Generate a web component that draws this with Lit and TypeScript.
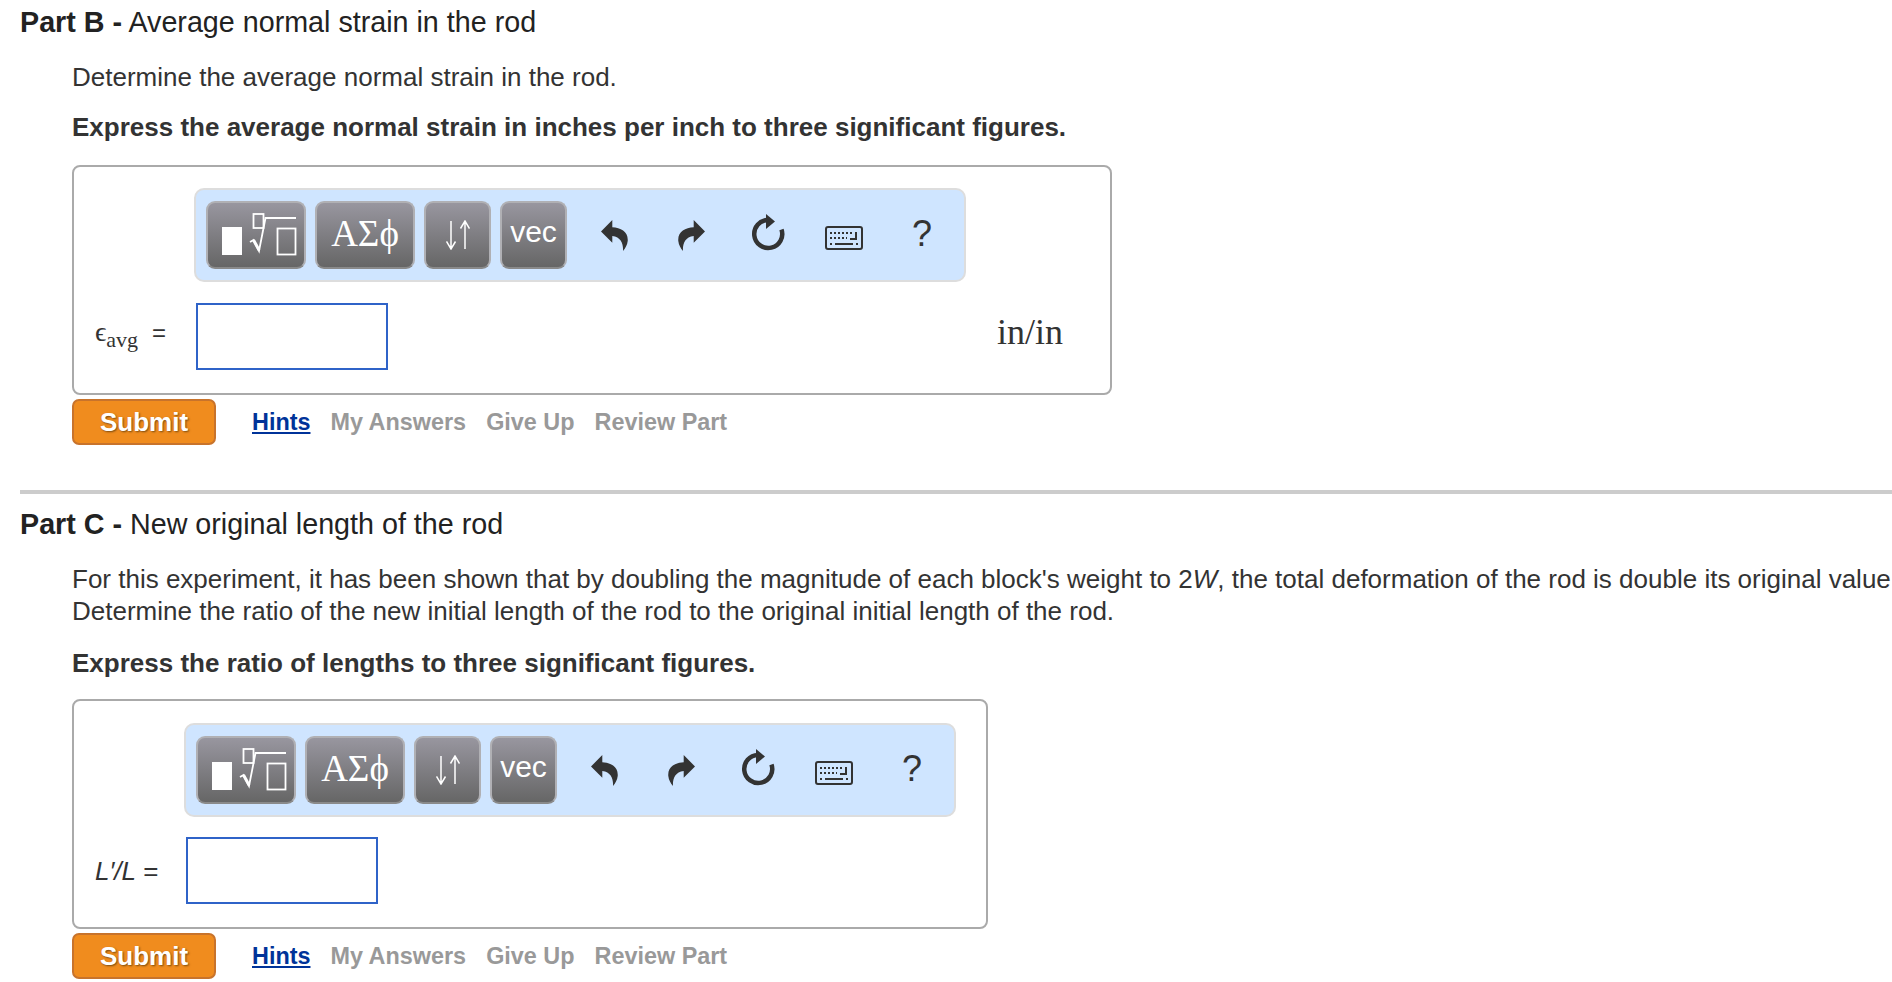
import { LitElement, html, css, svg } from "lit";
import { customElement } from "lit/decorators.js";

const templateIcon = svg`
  <svg class="ic-template" viewBox="0 0 100 68" width="100" height="68">
    <rect x="16" y="26" width="20" height="28" fill="#fff"/>
    <rect x="47.500" y="13" width="10" height="14" fill="none" stroke="#fff" stroke-width="1.800"/>
    <path d="M44 41l3.500-2 5.500 11 6.500-33H90" fill="none" stroke="#fff" stroke-width="1.800"/>
    <path d="M47.500 39l5.500 10" fill="none" stroke="#fff" stroke-width="3"/>
    <rect x="71.500" y="27.500" width="18" height="26" fill="none" stroke="#fff" stroke-width="1.800"/>
  </svg>`;

const arrowsIcon = svg`
  <svg viewBox="0 0 24 30" width="24" height="30">
    <path d="M5 1v27M.500 21.500L5 29l4.500-7.500" fill="none" stroke="#fff" stroke-width="1.500"/>
    <path d="M19 29V2M14.500 8.500L19 1l4.500 7.500" fill="none" stroke="#fff" stroke-width="1.500"/>
  </svg>`;

const undoIcon = svg`
  <svg viewBox="0 0 27 31" width="27" height="31">
    <path fill="#333" d="M0 11.500L11.300 0v7.300C20 7.600 27.500 12 26.700 21c-.4 4-2.500 7.500-4.700 10 .5-7-2-14-10.700-15v6.700z"/>
  </svg>`;

const redoIcon = svg`
  <svg viewBox="0 0 27 31" width="27" height="31">
    <path fill="#333" d="M27 11.500L15.700 0v7.300C7 7.600-.5 12 .3 21c.4 4 2.500 7.500 4.700 10-.5-7 2-14 10.700-15v6.700z"/>
  </svg>`;

const refreshIcon = svg`
  <svg viewBox="0 0 34 38" width="34" height="38">
    <path d="M30.500 15.500a14 14 0 1 1-13.500-9.500" fill="none" stroke="#333" stroke-width="4.500"/>
    <path fill="#333" d="M15 0l9 7.500-9 7.500z"/>
  </svg>`;

const keyboardIcon = svg`
  <svg viewBox="0 0 38 24" width="38" height="24">
    <rect x="1" y="1" width="36" height="22" rx="2" fill="none" stroke="#333" stroke-width="2"/>
    <path fill="none" stroke="#333" stroke-width="2" stroke-dasharray="2 2" d="M5 7h24M5 12h17"/>
    <path fill="none" stroke="#333" stroke-width="2" d="M31 6v7h-6M10 18h18"/>
    <path fill="#333" d="M5 17h2v2H5zM31 17h2v2h-2z"/>
  </svg>`;

const toolbar = () => html`
  <div class="toolbar">
    <span class="btn wide">${templateIcon}</span>
    <span class="btn wide greek">ΑΣϕ</span>
    <span class="btn narrow">${arrowsIcon}</span>
    <span class="btn narrow vec">vec</span>
    <span class="tool undo">${undoIcon}</span>
    <span class="tool redo">${redoIcon}</span>
    <span class="tool refresh">${refreshIcon}</span>
    <span class="tool keyboard">${keyboardIcon}</span>
    <span class="tool help">?</span>
  </div>
`;

const actions = () => html`
  <div class="actions">
    <span class="submit">Submit</span>
    <a class="link hints">Hints</a>
    <a class="link">My Answers</a>
    <a class="link">Give Up</a>
    <a class="link">Review Part</a>
  </div>
`;

@customElement("app-root")
export class AppRoot extends LitElement {
  static styles = css`
    :host {
      display: block;
      width: 1892px;
      height: 982px;
      overflow: hidden;
      background: #fff;
      color: #333;
      font-family: "Liberation Sans", Arial, sans-serif;
      font-size: 26px;
      line-height: 32px;
    }
    .part-b { padding: 6px 0 0 20px; height: 490px; box-sizing: border-box; }
    .part-c { border-top: 4px solid #ccc; margin-left: 20px; padding-top: 14px; }
    .title { color: #222; font-size: 28.700px; }
    .body { margin: 23px 0 0 52px; white-space: nowrap; }
    .strong { font-weight: bold; margin: 18px 0 0 52px; }
    .part-c .strong { margin-top: 20px; }
    .box {
      margin: 22px 0 0 52px;
      border: 2px solid #aaa;
      border-radius: 8px;
      box-sizing: border-box;
      height: 230px;
      display: flex;
      flex-direction: column;
    }
    .part-b .box { width: 1040px; padding: 21px 0 0 120px; }
    .part-c .box { width: 916px; padding: 22px 0 0 110px; margin-top: 20px; }

    .toolbar {
      width: 772px;
      height: 94px;
      box-sizing: border-box;
      border: 2px solid #ddd;
      border-radius: 10px;
      background: #cfe5ff;
      display: flex;
      align-items: center;
      gap: 9px;
      padding-left: 10px;
    }
    .btn {
      height: 68px;
      box-sizing: border-box;
      border: 2px solid #b0b0b4;
      border-bottom-color: #8a8a8a;
      border-radius: 9px;
      background: linear-gradient(#98969f, #666);
      color: #fff;
      display: flex;
      align-items: center;
      justify-content: center;
      overflow: hidden;
    }
    .wide { width: 100px; }
    .narrow { width: 67px; }
    .greek { font-family: "Liberation Serif", serif; font-size: 37px; padding-bottom: 2px; }
    .vec { font-size: 30px; padding-bottom: 6px; }
    .ic-template { flex: none; margin: 0 -2px; }
    .tool { display: flex; flex: none; color: #333; }
    .undo { margin-left: 25px; }
    .redo { margin-left: 41px; }
    .refresh { margin-left: 37px; padding-bottom: 4px; }
    .keyboard { margin-left: 31px; padding-top: 6px; }
    .help { margin-left: 40px; font-size: 36px; padding-bottom: 2px; }

    .answer {
      display: flex;
      align-items: center;
      height: 67px;
      margin: 21px 0 0 -120px;
    }
    .part-c .answer { margin: 20px 0 0 -110px; }
    .label {
      width: 122px;
      padding-left: 21px;
      box-sizing: border-box;
      flex: none;
      white-space: nowrap;
    }
    .part-c .label { width: 112px; }
    .label.math { font-family: "Liberation Serif", serif; font-size: 28px; padding-bottom: 8px; }
    .label sub { font-size: 22px; line-height: 0; vertical-align: -6px; }
    .label .eq { font-family: "Liberation Sans", sans-serif; margin-left: 14px; font-size: 24px; }
    .field {
      width: 192px;
      height: 67px;
      box-sizing: border-box;
      border: 2px solid #2f63c8;
      background: #fff;
      flex: none;
    }
    .unit {
      margin-left: auto;
      margin-right: 47px;
      font-family: "Liberation Serif", serif;
      font-size: 36px;
      padding-bottom: 10px;
    }

    .actions {
      display: flex;
      align-items: center;
      gap: 20px;
      margin: 4px 0 0 52px;
    }
    .submit {
      width: 144px;
      height: 46px;
      box-sizing: border-box;
      border: 2px solid #c8732b;
      border-radius: 7px;
      background: #f08c1e;
      color: #fff;
      font-weight: bold;
      font-size: 26px;
      text-shadow: 1px 1px 2px #7a4a10;
      display: flex;
      align-items: center;
      justify-content: center;
      margin-right: 16px;
    }
    .link { font-weight: bold; font-size: 23.400px; color: #999; }
    .hints { color: #039; text-decoration: underline; }
  `;

  render() {
    return html`
      <section class="part-b">
        <div class="title"><b>Part B -</b> Average normal strain in the rod</div>
        <div class="body">Determine the average normal strain in the rod.</div>
        <div class="strong">Express the average normal strain in inches per inch to three significant figures.</div>
        <div class="box">
          ${toolbar()}
          <div class="answer">
            <span class="label math">ϵ<sub>avg</sub><span class="eq">=</span></span>
            <span class="field"></span>
            <span class="unit">in/in</span>
          </div>
        </div>
        ${actions()}
      </section>
      <section class="part-c">
        <div class="title"><b>Part C -</b> New original length of the rod</div>
        <div class="body">
          For this experiment, it has been shown that by doubling the magnitude of each block's weight to 2<i>W</i>, the total deformation of the rod is double its original value.<br />
          Determine the ratio of the new initial length of the rod to the original initial length of the rod.
        </div>
        <div class="strong">Express the ratio of lengths to three significant figures.</div>
        <div class="box">
          ${toolbar()}
          <div class="answer">
            <span class="label"><i>L′/L</i> =</span>
            <span class="field"></span>
          </div>
        </div>
        ${actions()}
      </section>
    `;
  }
}
